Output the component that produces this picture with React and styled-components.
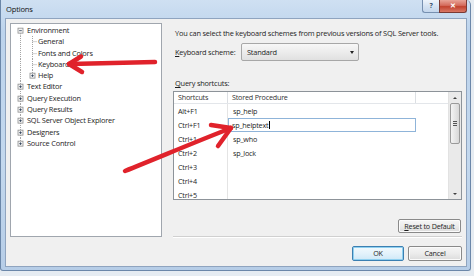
import React from "react";
import styled, { createGlobalStyle } from "styled-components";

const GlobalStyle = createGlobalStyle`
  html, body {
    margin: 0;
    padding: 0;
    background: #e6ecf2;
  }
  body {
    font-family: "Open Sans", "Noto Sans", sans-serif;
    color: #1e1e1e;
    letter-spacing: -0.2px;
  }
`;

const treeItems = [
  { label: "Environment", level: 0, expander: "minus", first: true },
  { label: "General", level: 1 },
  { label: "Fonts and Colors", level: 1 },
  { label: "Keyboard", level: 1 },
  { label: "Help", level: 1, expander: "plus", lastChild: true },
  { label: "Text Editor", level: 0, expander: "plus" },
  { label: "Query Execution", level: 0, expander: "plus" },
  { label: "Query Results", level: 0, expander: "plus" },
  { label: "SQL Server Object Explorer", level: 0, expander: "plus" },
  { label: "Designers", level: 0, expander: "plus" },
  { label: "Source Control", level: 0, expander: "plus", last: true },
];

const shortcuts = [
  { key: "Alt+F1", proc: "sp_help" },
  { key: "Ctrl+F1", proc: "sp_helptext", editing: true },
  { key: "Ctrl+1", proc: "sp_who" },
  { key: "Ctrl+2", proc: "sp_lock" },
  { key: "Ctrl+3", proc: "" },
  { key: "Ctrl+4", proc: "" },
  { key: "Ctrl+5", proc: "" },
];

const ROW_H = 11.3;

const TreeGuide = ({ item }) => {
  const mid = ROW_H / 2;
  const w = item.level === 0 ? 16 : 27;
  return (
    <svg width={w} height={ROW_H} style={{ flexShrink: 0 }}>
      <g stroke="#a5a5a5" strokeWidth="1" strokeDasharray="1 1">
        {item.level === 0 && (
          <line
            x1="9.5"
            y1={item.first ? mid : 0}
            x2="9.5"
            y2={item.last ? mid : ROW_H}
          />
        )}
        {item.level === 1 && (
          <>
            <line x1="9.5" y1="0" x2="9.5" y2={ROW_H} />
            <line x1="21.5" y1="0" x2="21.5" y2={item.lastChild ? mid : ROW_H} />
            {!item.expander && <line x1="21.5" y1={mid} x2="26" y2={mid} />}
          </>
        )}
      </g>
      {item.expander && (
        <g transform={`translate(${item.level === 0 ? 7 : 19}, ${mid - 2.5})`}>
          <rect x="0" y="0" width="5" height="5" fill="#f4f4f4" stroke="#8e8f8f" strokeWidth="0.8" />
          <line x1="1.2" y1="2.5" x2="3.8" y2="2.5" stroke="#2c3e55" strokeWidth="0.8" />
          {item.expander === "plus" && (
            <line x1="2.5" y1="1.2" x2="2.5" y2="3.8" stroke="#2c3e55" strokeWidth="0.8" />
          )}
        </g>
      )}
    </svg>
  );
};

const App = () => {
  return (
    <Page>
      <GlobalStyle />
      <Window>
        <TitleBar>
          <Title>Options</Title>
          <CaptionButtons>
            <HelpButton>?</HelpButton>
            <CloseButton>✕</CloseButton>
          </CaptionButtons>
        </TitleBar>
        <Client>
          <Body>
            <Tree>
              {treeItems.map((item) => (
                <TreeRow key={item.label}>
                  <TreeGuide item={item} />
                  <TreeLabel>{item.label}</TreeLabel>
                </TreeRow>
              ))}
            </Tree>
            <Panel>
              <Description>
                You can select the keyboard schemes from previous versions of SQL Server tools.
              </Description>
              <SchemeRow>
                <SchemeLabel>
                  <u>K</u>eyboard scheme:
                </SchemeLabel>
                <Select>
                  <span>Standard</span>
                  <DropArrow />
                </Select>
              </SchemeRow>
              <SectionLabel>
                <u>Q</u>uery shortcuts:
              </SectionLabel>
              <Grid>
                <Table>
                  <HeaderRow>
                    <HeaderCell $w={54}>Shortcuts</HeaderCell>
                    <HeaderCell $w={188}>Stored Procedure</HeaderCell>
                    <HeaderFill />
                  </HeaderRow>
                  {shortcuts.map((s) => (
                    <Row key={s.key}>
                      <KeyCell>{s.key}</KeyCell>
                      <ProcCell $editing={s.editing}>
                        {s.proc}
                        {s.editing && <Caret />}
                      </ProcCell>
                    </Row>
                  ))}
                </Table>
                <ScrollBar>
                  <ScrollArrow $dir="up" />
                  <Thumb>
                    <Grip />
                  </Thumb>
                  <Track />
                  <ScrollArrow $dir="down" />
                </ScrollBar>
              </Grid>
              <ResetRow>
                <Button $w={63}>
                  <u>R</u>eset to Default
                </Button>
              </ResetRow>
              <Separator />
              <DialogButtons>
                <Button $w={52} $default>
                  OK
                </Button>
                <Button $w={54}>Cancel</Button>
              </DialogButtons>
            </Panel>
          </Body>
        </Client>
      </Window>
      <Arrows width="474" height="276">
        <g stroke="#e0222b" strokeWidth="4.5" strokeLinecap="round" fill="none">
          <path d="M155 62 C130 62.5 100 63.5 70 64" />
          <path d="M69 64 L81 56.5" />
          <path d="M69 64 L82 72" />
          <path d="M125 171 C160 157 195 142 230 128.5" />
          <path d="M231 128 L211 125" />
          <path d="M231 128 L218 146" />
        </g>
      </Arrows>
    </Page>
  );
};

export default App;

const Page = styled.div`
  position: relative;
  width: 474px;
  height: 276px;
  overflow: hidden;
`;

const Arrows = styled.svg`
  position: absolute;
  left: 0;
  top: 0;
  pointer-events: none;
`;

const Window = styled.div`
  width: 471px;
  height: 271px;
  box-sizing: border-box;
  display: flex;
  flex-direction: column;
  padding: 0 3px 3px 4px;
  border: 1px solid #6b87a9;
  border-top: none;
  border-radius: 0 5px 3px 3px;
  background: linear-gradient(180deg, #cfe0f2 0%, #bcd3ec 12%, #c3d8ee 60%, #b6cde7 100%);
`;

const TitleBar = styled.div`
  height: 18px;
  flex-shrink: 0;
  display: flex;
  align-items: flex-start;
  justify-content: space-between;
`;

const Title = styled.span`
  font-size: 7.6px;
  line-height: 18px;
  padding-left: 1px;
  color: #111;
`;

const CaptionButtons = styled.div`
  display: flex;
`;

const HelpButton = styled.div`
  width: 17px;
  height: 13px;
  box-sizing: border-box;
  border: 1px solid #7790b0;
  border-top: none;
  border-right: none;
  border-radius: 0 0 0 3px;
  background: linear-gradient(180deg, #eef4fb 0%, #d6e3f2 50%, #c4d6ec 100%);
  color: #3a4f6a;
  font-size: 7px;
  font-weight: bold;
  text-align: center;
  line-height: 12px;
`;

const CloseButton = styled.div`
  width: 28px;
  height: 13px;
  box-sizing: border-box;
  border: 1px solid #7a3a34;
  border-top: none;
  border-radius: 0 0 3px 0;
  background: linear-gradient(180deg, #e8a497 0%, #d46b5c 45%, #c2432f 55%, #d97866 100%);
  color: #fff;
  font-size: 7px;
  font-weight: bold;
  text-align: center;
  line-height: 12px;
`;

const Client = styled.div`
  flex: 1;
  border: 1px solid #8fa4bf;
  background: #f0f0f0;
`;

const Body = styled.div`
  display: flex;
  padding: 4px 0 0 4px;
`;

const Tree = styled.div`
  width: 152px;
  height: 214px;
  box-sizing: border-box;
  border: 1px solid #a0a6ae;
  background: #fff;
  padding-top: 1px;
  flex-shrink: 0;
`;

const TreeRow = styled.div`
  display: flex;
  align-items: center;
  height: ${ROW_H}px;
`;

const TreeLabel = styled.span`
  font-size: 7.4px;
  line-height: ${ROW_H}px;
  white-space: nowrap;
`;

const Panel = styled.div`
  width: 289px;
  margin-left: 11px;
  display: flex;
  flex-direction: column;
`;

const Description = styled.div`
  font-size: 7.4px;
  line-height: 10px;
  margin-top: 5px;
  padding-left: 2px;
  white-space: nowrap;
`;

const SchemeRow = styled.div`
  display: flex;
  align-items: center;
  margin-top: 5px;
`;

const SchemeLabel = styled.span`
  width: 66px;
  padding-left: 2px;
  font-size: 7.4px;
`;

const Select = styled.div`
  width: 118px;
  height: 18px;
  box-sizing: border-box;
  border: 1px solid #a7a7a7;
  border-radius: 2px;
  background: linear-gradient(180deg, #f7f7f7 0%, #ececec 50%, #e0e0e0 100%);
  display: flex;
  align-items: center;
  justify-content: space-between;
  padding: 0 4px 0 5px;
  font-size: 7.4px;
`;

const DropArrow = styled.span`
  width: 0;
  height: 0;
  border-left: 2.5px solid transparent;
  border-right: 2.5px solid transparent;
  border-top: 3px solid #222;
`;

const SectionLabel = styled.div`
  font-size: 7.4px;
  line-height: 10px;
  margin-top: 17px;
  padding-left: 2px;
`;

const Grid = styled.div`
  margin-top: 3px;
  width: 289px;
  height: 109px;
  box-sizing: border-box;
  border: 1px solid #8d9399;
  background: #fff;
  display: flex;
  overflow: hidden;
`;

const Table = styled.div`
  flex: 1;
  display: flex;
  flex-direction: column;
`;

const HeaderRow = styled.div`
  display: flex;
  height: 11px;
  flex-shrink: 0;
  border-bottom: 1px solid #e3e6ea;
`;

const HeaderCell = styled.div`
  width: ${(p) => p.$w}px;
  flex-shrink: 0;
  box-sizing: border-box;
  border-right: 1px solid #dcdfe3;
  padding-left: 4px;
  font-size: 7.2px;
  line-height: 11px;
  color: #333;
`;

const HeaderFill = styled.div`
  flex: 1;
`;

const Row = styled.div`
  display: flex;
  height: 14px;
  flex-shrink: 0;
`;

const KeyCell = styled.div`
  width: 54px;
  box-sizing: border-box;
  border-right: 1px solid #e4e4e4;
  padding-left: 4px;
  font-size: 7.2px;
  line-height: 14px;
`;

const ProcCell = styled.div`
  width: 188px;
  box-sizing: border-box;
  padding-left: ${(p) => (p.$editing ? "3px" : "4px")};
  border: ${(p) => (p.$editing ? "1px solid #8fb4d9" : "1px solid transparent")};
  font-size: 7.2px;
  line-height: 12px;
  display: flex;
  align-items: center;
`;

const Caret = styled.span`
  width: 1px;
  height: 8px;
  background: #000;
  margin-left: 0.5px;
`;

const ScrollBar = styled.div`
  width: 12px;
  flex-shrink: 0;
  display: flex;
  flex-direction: column;
  background: #eaeaea;
  border-left: 1px solid #e2e2e2;
`;

const ScrollArrow = styled.div`
  height: 11px;
  flex-shrink: 0;
  display: flex;
  align-items: center;
  justify-content: center;
  &::after {
    content: "";
    border-left: 2.5px solid transparent;
    border-right: 2.5px solid transparent;
    ${(p) =>
      p.$dir === "up"
        ? "border-bottom: 2.5px solid #404040;"
        : "border-top: 2.5px solid #404040;"}
  }
`;

const Thumb = styled.div`
  height: 41px;
  flex-shrink: 0;
  margin: 0 1px;
  box-sizing: border-box;
  border: 1px solid #9a9a9a;
  border-radius: 2px;
  background: linear-gradient(90deg, #f4f4f4 0%, #e6e6e6 50%, #d8d8d8 100%);
  display: flex;
  align-items: center;
  justify-content: center;
`;

const Grip = styled.div`
  width: 4px;
  height: 5px;
  background: repeating-linear-gradient(180deg, #555 0 1px, transparent 1px 2px);
`;

const Track = styled.div`
  flex: 1;
`;

const ResetRow = styled.div`
  display: flex;
  justify-content: flex-end;
  margin-top: 19px;
  padding-right: 1px;
`;

const Button = styled.div`
  width: ${(p) => p.$w}px;
  height: ${(p) => (p.$default ? 15 : 14)}px;
  box-sizing: border-box;
  border: 1px solid ${(p) => (p.$default ? "#3c7fb1" : "#8a8a8a")};
  border-radius: 2px;
  background: ${(p) =>
    p.$default
      ? "linear-gradient(180deg, #f2f9fd 0%, #e3f2fb 50%, #cfe8f7 100%)"
      : "linear-gradient(180deg, #f5f5f5 0%, #ececec 50%, #dcdcdc 100%)"};
  box-shadow: ${(p) => (p.$default ? "inset 0 0 0 1px #8fd0f0" : "inset 0 0 0 1px #fbfbfb")};
  font-size: 7.2px;
  text-align: center;
  line-height: ${(p) => (p.$default ? 13 : 12)}px;
  color: #1e1e1e;
  white-space: nowrap;
`;

const Separator = styled.div`
  margin-top: 3px;
  height: 0;
  border-top: 1px solid #d0d0d0;
  border-bottom: 1px solid #ffffff;
`;

const DialogButtons = styled.div`
  display: flex;
  justify-content: flex-end;
  gap: 4px;
  margin-top: 8px;
  & > div {
    height: 15px;
    line-height: 13px;
  }
`;
